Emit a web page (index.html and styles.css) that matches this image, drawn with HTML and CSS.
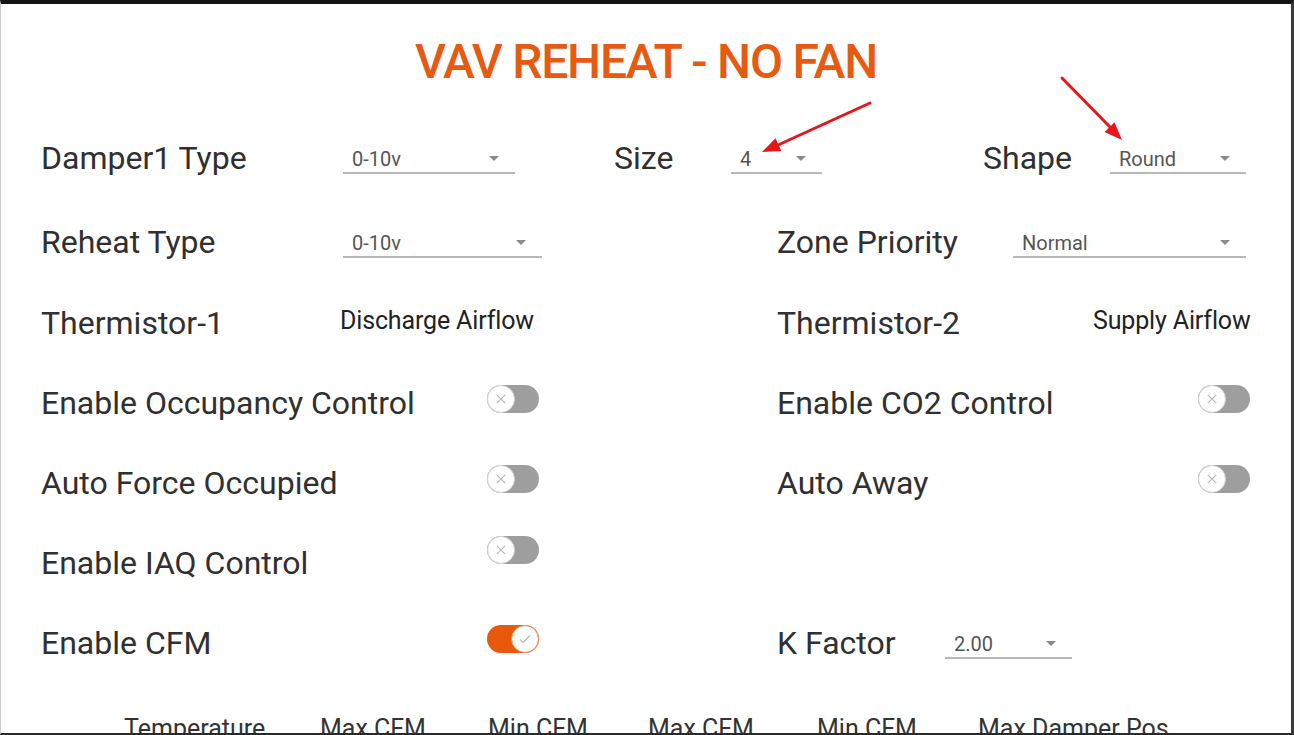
FILE: index.html
```html
<!DOCTYPE html>
<html lang="en">
<head>
    <meta charset="UTF-8">
    <meta name="viewport" content="width=device-width, initial-scale=1.0">
    <title>VAV Reheat - No Fan</title>
    <link rel="stylesheet" href="styles.css">
</head>
<body>

    <div class="screen">
        <h1 class="title">VAV REHEAT - NO FAN</h1>

        <div class="form">
            <!-- damper -->
            <div class="row">
                <span class="label w-302">Damper1 Type</span>
                <div class="select w-172"><span>0-10v</span><i class="caret"></i></div>
                <span class="label w-117 ml-99">Size</span>
                <div class="select w-91"><span>4</span><i class="caret"></i></div>
                <span class="label w-127 ml-161">Shape</span>
                <div class="select w-136"><span>Round</span><i class="caret"></i></div>
            </div>

            <div class="row row-second">
                <div class="half">
                    <span class="label w-302">Reheat Type</span>
                    <div class="select w-199"><span>0-10v</span><i class="caret"></i></div>
                </div>
                <div class="half">
                    <span class="label w-236">Zone Priority</span>
                    <div class="select w-233"><span>Normal</span><i class="caret"></i></div>
                </div>
            </div>

            <div class="row">
                <div class="half">
                    <span class="label w-299">Thermistor-1</span>
                    <span class="value">Discharge Airflow</span>
                </div>
                <div class="half">
                    <span class="label w-316">Thermistor-2</span>
                    <span class="value">Supply Airflow</span>
                </div>
            </div>

            <div class="row">
                <div class="half">
                    <span class="label w-446">Enable Occupancy Control</span>
                    <span class="switch"><span class="knob"><svg viewBox="0 0 28 28"><path d="M9.5 9.5l9 9M18.5 9.5l-9 9"/></svg></span></span>
                </div>
                <div class="half">
                    <span class="label w-421">Enable CO2 Control</span>
                    <span class="switch"><span class="knob"><svg viewBox="0 0 28 28"><path d="M9.5 9.5l9 9M18.5 9.5l-9 9"/></svg></span></span>
                </div>
            </div>

            <div class="row">
                <div class="half">
                    <span class="label w-446">Auto Force Occupied</span>
                    <span class="switch"><span class="knob"><svg viewBox="0 0 28 28"><path d="M9.5 9.5l9 9M18.5 9.5l-9 9"/></svg></span></span>
                </div>
                <div class="half">
                    <span class="label w-421">Auto Away</span>
                    <span class="switch"><span class="knob"><svg viewBox="0 0 28 28"><path d="M9.5 9.5l9 9M18.5 9.5l-9 9"/></svg></span></span>
                </div>
            </div>

            <div class="row">
                <div class="half">
                    <span class="label w-446">Enable IAQ Control</span>
                    <span class="switch raised"><span class="knob"><svg viewBox="0 0 28 28"><path d="M9.5 9.5l9 9M18.5 9.5l-9 9"/></svg></span></span>
                </div>
            </div>

            <div class="row">
                <div class="half">
                    <span class="label w-446">Enable CFM</span>
                    <span class="switch on"><span class="knob"><svg viewBox="0 0 28 28"><path d="M8.5 14.5l3.5 3.5 7.5-8"/></svg></span></span>
                </div>
                <div class="half">
                    <span class="label w-168">K Factor</span>
                    <div class="select w-127"><span>2.00</span><i class="caret"></i></div>
                </div>
            </div>

            <div class="row headers">
                <span class="head w-196">Temperature</span>
                <span class="head w-168">Max CFM</span>
                <span class="head w-160">Min CFM</span>
                <span class="head w-169">Max CFM</span>
                <span class="head w-161">Min CFM</span>
                <span class="head">Max Damper Pos</span>
            </div>
        </div>
    </div>

    <!-- red annotation arrows -->
    <svg class="marks" width="1294" height="735" viewBox="0 0 1294 735">
        <line x1="870" y1="103" x2="778" y2="145"/>
        <polygon points="762,152 781.3,151 775.5,138.2"/>
        <line x1="1062" y1="78" x2="1110" y2="127"/>
        <polygon points="1122,140 1104.5,132 1114.5,122.2"/>
    </svg>

</body>
</html>
```

FILE: styles.css
```css
* {
    margin: 0;
    padding: 0;
    box-sizing: border-box;
}

body {
    position: relative;
    width: 1294px;
    height: 735px;
    overflow: hidden;
    font-family: Roboto, "Liberation Sans", Arial, sans-serif;
    background-color: #fff;
}

.screen {
    width: 1294px;
    height: 735px;
    background-color: #fff;
    border-top: 4px solid #151515;
    border-right: 3px solid #3c3c3c;
    border-bottom: 2px solid #2a2a2a;
    border-left: 1px solid #c9c9c9;
    overflow: hidden;
}

.title {
    height: 114px;
    display: flex;
    align-items: center;
    justify-content: center;
    font-size: 48px;
    font-weight: 500;
    letter-spacing: -1.2px;
    color: #e65a12;
    padding-left: 0;
}

.form {
    padding-left: 40px;
}

.row {
    display: flex;
    align-items: center;
    height: 80px;
}

.row-second {
    margin-top: 4px;
    margin-bottom: 1px;
}

.half {
    display: flex;
    align-items: center;
    width: 736px;
    flex-shrink: 0;
}

.label {
    flex-shrink: 0;
    font-size: 32px;
    color: #303030;
    white-space: nowrap;
}

.value {
    margin-top: -6px;
    font-size: 25px;
    color: #222;
    letter-spacing: -0.15px;
    white-space: nowrap;
}

/* dropdowns */
.select {
    flex-shrink: 0;
    display: flex;
    justify-content: space-between;
    align-items: flex-end;
    height: 28px;
    margin-top: 4px;
    padding: 0 16px 1px 9px;
    border-bottom: 2px solid #b8b8b8;
    font-size: 20px;
    color: #555;
}

.caret {
    align-self: center;
    width: 0;
    height: 0;
    border-left: 5px solid transparent;
    border-right: 5px solid transparent;
    border-top: 5px solid #8a8a8a;
}

/* switches */
.switch {
    position: relative;
    display: block;
    width: 52px;
    height: 28px;
    margin-top: -8px;
    border-radius: 14px;
    background-color: #9e9e9e;
}

.switch.raised {
    margin-top: -26px;
}

.switch .knob {
    position: absolute;
    top: 0;
    left: 0;
    width: 28px;
    height: 28px;
    border-radius: 50%;
    background-color: #fff;
    border: 1px solid #d2d2d2;
}

.switch .knob svg {
    display: block;
    width: 26px;
    height: 26px;
    fill: none;
    stroke: #b9b9b9;
    stroke-width: 1.3;
}

.switch.on {
    background-color: #e8590c;
}

.switch.on .knob {
    left: auto;
    right: 0;
    border-color: #f08a50;
}

.headers {
    align-items: flex-start;
    padding-left: 83px;
    padding-top: 31px;
}

.head {
    flex-shrink: 0;
    font-size: 25px;
    color: #333;
    white-space: nowrap;
}

.w-91 { width: 91px; }
.w-117 { width: 117px; }
.w-127 { width: 127px; }
.w-136 { width: 136px; }
.w-160 { width: 160px; }
.w-161 { width: 161px; }
.w-168 { width: 168px; }
.w-169 { width: 169px; }
.w-172 { width: 172px; }
.w-196 { width: 196px; }
.w-199 { width: 199px; }
.w-233 { width: 233px; }
.w-236 { width: 236px; }
.w-299 { width: 299px; }
.w-302 { width: 302px; }
.w-316 { width: 316px; }
.w-421 { width: 421px; }
.w-446 { width: 446px; }

.ml-99 { margin-left: 99px; }
.ml-161 { margin-left: 161px; }

.marks {
    position: absolute;
    top: 0;
    left: 0;
    pointer-events: none;
}

.marks line {
    stroke: #e8161b;
    stroke-width: 3;
    stroke-linecap: round;
}

.marks polygon {
    fill: #e8161b;
}
```
